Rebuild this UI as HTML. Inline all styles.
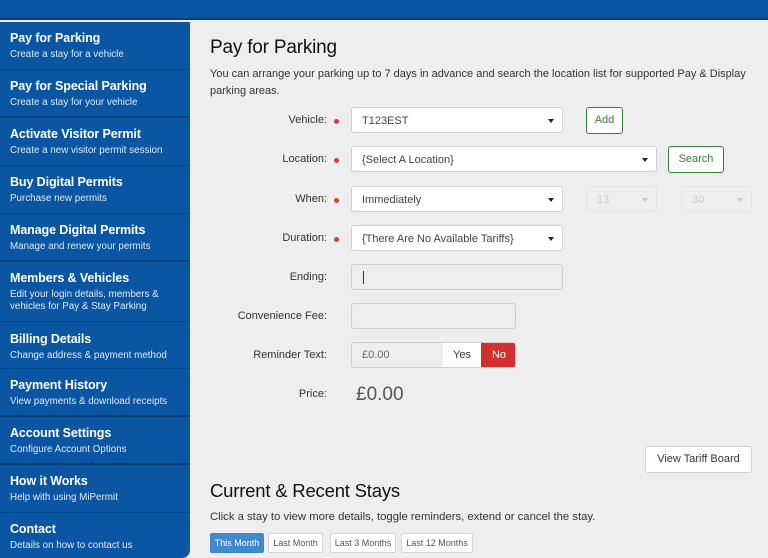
<!DOCTYPE html>
<html><head><meta charset="utf-8"><style>
*{box-sizing:border-box;margin:0;padding:0}
body{width:768px;height:558px;overflow:hidden;background:#eeeeee;font-family:"Liberation Sans",sans-serif;position:relative}
.top{position:absolute;left:0;top:0;width:768px;height:20px;background:#0b56a3;border-bottom:2px solid #0a3f78}
.side{position:absolute;left:0;top:22px;width:190px;height:536px;background:#0b56a3;border-bottom-right-radius:8px;overflow:hidden}
.it{position:absolute;left:0;width:190px;color:#fff;padding-left:10px}
.it b{display:block;font-size:12.5px;margin-top:8px;letter-spacing:-.1px}
.it span{display:block;font-size:9.8px;color:#dfe9f5;margin-top:4px;line-height:12px}
.sep{position:absolute;left:0;width:190px;height:1px;border-top:1px dotted #0a3566}
.sep.s{border-top:2px solid #0a3f78}
h1{position:absolute;left:210px;top:37px;font-size:19px;font-weight:normal;color:#111;letter-spacing:-.2px}
.p{position:absolute;left:210px;font-size:11px;color:#333;line-height:17px;width:550px}
.lbl{position:absolute;font-size:11px;color:#333;text-align:right;width:150px;left:177px}
.dot{position:absolute;left:334px;width:5px;height:5px;border-radius:50%;background:#e53935}
.sel{position:absolute;background:#fff;border:1px solid #d0d0d0;border-radius:3px;height:26px;font-size:11px;color:#444;padding:7px 10px}
.sel:after{content:"";position:absolute;right:8px;top:11px;border-left:3.5px solid transparent;border-right:3.5px solid transparent;border-top:4px solid #222}
.sel.d{background:#eeeeee;border-color:#e3e3e3;color:#ccc}
.sel.d:after{border-top-color:#ccc}
.btn{position:absolute;border:1px solid #3a7d3a;border-radius:3px;background:#fff;color:#3a7d3a;font-size:11px;text-align:center;padding-top:6px;height:27px}
.inp{position:absolute;border:1px solid #cfcfcf;border-radius:3px;background:#eeeeee;height:26px}
.tab{position:absolute;top:533px;height:20px;border:1px solid #d4d4d4;border-radius:2px;background:#fff;font-size:9px;color:#555;padding-top:4px;text-align:center}
</style></head><body>
<div class="top"></div>
<div class="side">
<div class="it" style="top:1px"><b>Pay for Parking</b><span>Create a stay for a vehicle</span></div>
<div class="sep" style="top:47px"></div>
<div class="it" style="top:49px"><b>Pay for Special Parking</b><span>Create a stay for your vehicle</span></div>
<div class="sep s" style="top:94px"></div>
<div class="it" style="top:97px"><b>Activate Visitor Permit</b><span>Create a new visitor permit session</span></div>
<div class="sep" style="top:143px"></div>
<div class="it" style="top:145px"><b>Buy Digital Permits</b><span>Purchase new permits</span></div>
<div class="sep" style="top:191px"></div>
<div class="it" style="top:193px"><b>Manage Digital Permits</b><span>Manage and renew your permits</span></div>
<div class="sep s" style="top:238px"></div>
<div class="it" style="top:241px"><b>Members &amp; Vehicles</b><span>Edit your login details, members &amp;<br>vehicles for Pay &amp; Stay Parking</span></div>
<div class="sep" style="top:299px"></div>
<div class="it" style="top:302px"><b>Billing Details</b><span>Change address &amp; payment method</span></div>
<div class="sep" style="top:346px"></div>
<div class="it" style="top:348px"><b>Payment History</b><span>View payments &amp; download receipts</span></div>
<div class="sep s" style="top:393px"></div>
<div class="it" style="top:396px"><b>Account Settings</b><span>Configure Account Options</span></div>
<div class="sep s" style="top:441px"></div>
<div class="it" style="top:444px"><b>How it Works</b><span>Help with using MiPermit</span></div>
<div class="sep" style="top:490px"></div>
<div class="it" style="top:492px"><b>Contact</b><span>Details on how to contact us</span></div>
</div>

<h1>Pay for Parking</h1>
<div class="p" style="top:66px">You can arrange your parking up to 7 days in advance and search the location list for supported Pay &amp; Display parking areas.</div>

<div class="lbl" style="top:114px">Vehicle:</div><div class="dot" style="top:119px"></div>
<div class="sel" style="left:351px;top:107px;width:212px">T123EST</div>
<div class="btn" style="left:586px;top:107px;width:37px">Add</div>

<div class="lbl" style="top:153px">Location:</div><div class="dot" style="top:158px"></div>
<div class="sel" style="left:351px;top:146px;width:306px">{Select A Location}</div>
<div class="btn" style="left:668px;top:146px;width:56px">Search</div>

<div class="lbl" style="top:193px">When:</div><div class="dot" style="top:198px"></div>
<div class="sel" style="left:351px;top:186px;width:212px">Immediately</div>
<div class="sel d" style="left:586px;top:186px;width:71px">13</div>
<div class="sel d" style="left:681px;top:186px;width:71px">30</div>

<div class="lbl" style="top:232px">Duration:</div><div class="dot" style="top:237px"></div>
<div class="sel" style="left:351px;top:225px;width:212px">{There Are No Available Tariffs}</div>

<div class="lbl" style="top:271px">Ending:</div>
<div class="inp" style="left:351px;top:264px;width:212px"><div style="position:absolute;left:11px;top:6px;width:1px;height:13px;background:#333"></div></div>

<div class="lbl" style="top:310px">Convenience Fee:</div>
<div class="inp" style="left:351px;top:303px;width:165px"></div>

<div class="lbl" style="top:349px">Reminder Text:</div>
<div class="inp" style="left:351px;top:342px;width:165px;overflow:hidden">
<div style="position:absolute;left:10px;top:6px;font-size:11px;color:#666">£0.00</div>
<div style="position:absolute;left:91px;top:0;width:38px;height:24px;background:#fff;font-size:11px;color:#333;text-align:center;line-height:24px">Yes</div>
<div style="position:absolute;left:129px;top:0;width:36px;height:24px;background:#d32f2f;font-size:11px;color:#fff;text-align:center;line-height:24px">No</div>
</div>

<div class="lbl" style="top:388px">Price:</div>
<div style="position:absolute;left:356px;top:384px;font-size:19px;color:#555">£0.00</div>

<div class="btn" style="left:645px;top:446px;width:107px;border-color:#d0d0d0;color:#333">View Tariff Board</div>

<div style="position:absolute;left:210px;top:480px;font-size:18.5px;color:#111;letter-spacing:-.2px">Current &amp; Recent Stays</div>
<div class="p" style="top:509px;font-size:11.3px">Click a stay to view more details, toggle reminders, extend or cancel the stay.</div>
<div class="tab" style="left:210px;width:54px;background:#4089cf;border-color:#4089cf;color:#fff">This Month</div>
<div class="tab" style="left:268px;width:55px">Last Month</div>
<div class="tab" style="left:330px;width:66px">Last 3 Months</div>
<div class="tab" style="left:401px;width:72px">Last 12 Months</div>
</body></html>
